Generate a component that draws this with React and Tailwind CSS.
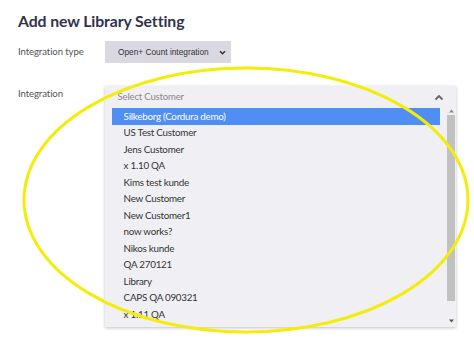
import React from 'react';

const customers = [
  'Silkeborg (Cordura demo)',
  'US Test Customer',
  'Jens Customer',
  'x 1.10 QA',
  'Kims test kunde',
  'New Customer',
  'New Customer1',
  'now works?',
  'Nikos kunde',
  'QA 270121',
  'Library',
  'CAPS QA 090321',
  'x 1.11 QA',
];

const App = () => {
  return (
    <div className="relative w-[474px] h-[345px] overflow-hidden bg-white px-[18px] pt-[10px] font-['Lato',sans-serif]">
      <h1 className="text-[15.8px] leading-[22px] font-bold text-[#32324e] tracking-[-0.1px]">Add new Library Setting</h1>

      <div className="flex items-center mt-[9px]">
        <span className="w-[87px] text-[9.6px] tracking-[-0.1px] text-[#555]">Integration type</span>
        <div className="w-[126px] h-[22px] bg-[#d9d8e3] flex items-center justify-between pl-[13px] pr-[5px] whitespace-nowrap font-['Liberation_Sans',sans-serif] text-[8.3px] text-[#333]">
          <span>Open+ Count integration</span>
          <svg width="7" height="5" viewBox="0 0 8 6">
            <path d="M1 1.5 L4 4.5 L7 1.5" stroke="#333" strokeWidth="1.8" fill="none" />
          </svg>
        </div>
      </div>

      <div className="flex mt-[23px]">
        <span className="w-[87px] text-[9.6px] tracking-[-0.1px] text-[#555] leading-[16px]">Integration</span>
        <div className="w-[353px] h-[241px] bg-[#f0f0f4] shadow-[0_1px_3px_rgba(0,0,0,0.25)] flex flex-col">
          <div className="h-[22px] flex items-center justify-between pl-[13px] pr-[12px] text-[9.6px] tracking-[-0.2px] text-[#888]">
            <span>Select Customer</span>
            <svg width="10" height="7" viewBox="0 0 10 7">
              <path d="M1.5 5.5 L5 2 L8.5 5.5" stroke="#666" strokeWidth="1.8" fill="none" />
            </svg>
          </div>
          <div className="flex flex-1 min-h-0">
            <ul className="w-[328px] ml-[7px] overflow-hidden">
              {customers.map((c, i) => (
                <li
                  key={c}
                  className={`h-[16.5px] flex items-center pl-[12px] text-[9.8px] tracking-[-0.25px] whitespace-nowrap ${i === 0 ? 'bg-[#4f8ef5] text-white' : 'text-[#333]'}`}
                >
                  {c}
                </li>
              ))}
            </ul>
            <div className="w-[9px] ml-[7px] flex flex-col items-center pt-[1px] pb-[4px]">
              <svg width="5" height="4" viewBox="0 0 5 4">
                <path d="M0 3.5 L2.5 0.5 L5 3.5 Z" fill="#888" />
              </svg>
              <div className="w-[8px] h-[186px] bg-[#c1c1c1] mt-[2px]" />
              <div className="flex-1" />
              <svg width="5" height="4" viewBox="0 0 5 4">
                <path d="M0 0.5 L2.5 3.5 L5 0.5 Z" fill="#555" />
              </svg>
            </div>
          </div>
        </div>
      </div>

      <svg className="absolute inset-0 pointer-events-none" width="474" height="345" viewBox="0 0 474 345">
        <ellipse cx="246" cy="200" rx="222" ry="132" fill="none" stroke="#f4ec0a" strokeWidth="3" />
      </svg>
    </div>
  );
};

export default App;
